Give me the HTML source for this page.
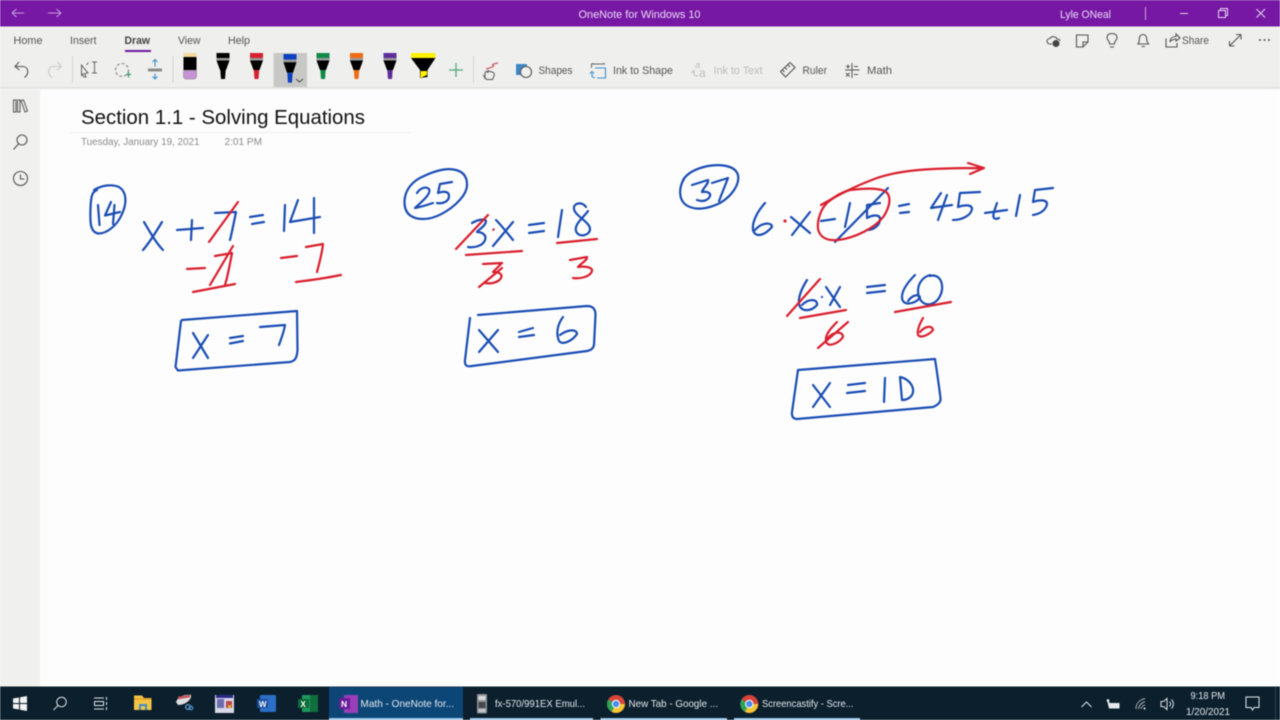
<!DOCTYPE html>
<html><head><meta charset="utf-8"><title>OneNote</title>
<style>
html,body{margin:0;padding:0;width:1280px;height:720px;overflow:hidden;background:#fff}
svg{display:block;filter:blur(.45px)}
text{font-family:"Liberation Sans",sans-serif}
.ink{fill:none;stroke-linecap:round;stroke-linejoin:round;stroke-width:2.2}
.b{stroke:#1a4db4}.r{stroke:#da1f2e}
.ic{fill:none;stroke:#555;stroke-width:1.1}
</style></head><body>
<svg width="1280" height="720" viewBox="0 0 1280 720" xmlns="http://www.w3.org/2000/svg">
<defs>
<linearGradient id="sh" x1="0" x2="0" y1="0" y2="1"><stop offset="0" stop-color="#d8d8d6"/><stop offset="1" stop-color="#fdfdfd"/></linearGradient>
<g id="pen"><rect x="-6.5" y="0" width="13" height="5" fill="var(--c)"/><rect x="-6.5" y="5" width="13" height="2.5" fill="#999"/><path d="M-6.5 7.500H6.500L3 17H-3Z" fill="#000"/><path d="M-2.700 17H2.700L2 26H-2Z" fill="var(--c)"/></g>
</defs>
<rect width="1280" height="720" fill="#fdfdfd"/>
<!-- sidebar -->
<rect x="0" y="87" width="40" height="600" fill="#f0f0ee"/>
<!-- ribbon -->
<rect x="0" y="26" width="1280" height="61" fill="#efefed"/>
<rect x="0" y="87" width="1280" height="3" fill="url(#sh)"/>
<!-- title bar -->
<rect width="1280" height="26.500" fill="#7618a4"/>
<path d="M12 13H24M12 13L16.500 9M12 13L16.500 17M48 13H61M61 13L56.500 9M61 13L56.500 17" fill="none" stroke="#c99be0" stroke-width="1.100"/>
<text x="578.500" y="18" font-size="11" fill="#ecdcf4" textLength="122" lengthAdjust="spacingAndGlyphs">OneNote for Windows 10</text>
<text x="1060" y="18" font-size="11" fill="#ecdcf4" textLength="51" lengthAdjust="spacingAndGlyphs">Lyle ONeal</text>
<path d="M1145.500 7V20" stroke="#c9a3dd" stroke-width="1"/>
<path d="M1180 13.500H1188" stroke="#e6d4ef" stroke-width="1"/>
<path d="M1218.500 10.500H1225.500V17.500H1218.500ZM1220.500 10.500V8.500H1227.500V15.500H1225.500" fill="none" stroke="#e6d4ef" stroke-width="1"/>
<path d="M1256.500 9L1265 17.500M1265 9L1256.500 17.500" stroke="#e6d4ef" stroke-width="1"/>
<!-- tabs -->
<g font-size="11" fill="#555">
<text x="13.500" y="44" textLength="29" lengthAdjust="spacingAndGlyphs">Home</text>
<text x="70" y="44" textLength="26.500" lengthAdjust="spacingAndGlyphs">Insert</text>
<text x="124.500" y="44" font-weight="bold" fill="#444" textLength="25.500" lengthAdjust="spacingAndGlyphs">Draw</text>
<text x="178" y="44" textLength="22.500" lengthAdjust="spacingAndGlyphs">View</text>
<text x="228" y="44" textLength="22" lengthAdjust="spacingAndGlyphs">Help</text>
</g>
<rect x="125" y="50" width="26" height="2" fill="#6a179c"/>
<!-- top-right icons -->
<g class="ic">
<path d="M1049 44H1052M1050 44C1046 44 1046 38.500 1050 38.500C1051 36 1056 36 1057 39C1059 39 1060 40 1060 41"/>
<circle cx="1056" cy="43.500" r="3.500" fill="#444" stroke="none"/>
<path d="M1076.500 35H1088V42L1083 47H1076.500ZM1083 47V42H1088"/>
<path d="M1109.500 44H1114.500V43C1114.500 41.500 1117 40 1117 37.500C1117 34.500 1114.500 33.500 1112 33.500C1109.500 33.500 1107 34.500 1107 37.500C1107 40 1109.500 41.500 1109.500 43ZM1110 47H1114"/>
<path d="M1138 44H1148.500C1146.500 42 1147 40 1146.500 37.500C1146 35.500 1145 34.500 1143 34.500C1141 34.500 1140 35.500 1139.500 37.500C1139 40 1139.500 42 1138 44ZM1141.500 46.500H1145"/>
<path d="M1166 38.500V47H1177V43M1170 42C1170 38 1173 36.500 1176 36.500V34L1180 38L1176 41V39C1174 39 1171 40 1170 42Z"/>
<path d="M1229.500 46L1241 34.500M1229.500 46V41M1229.500 46H1234.500M1241 34.500V39.500M1241 34.500H1236"/>
</g>
<text x="1182" y="44" font-size="11" fill="#555" textLength="27" lengthAdjust="spacingAndGlyphs">Share</text>
<g fill="#555"><circle cx="1260" cy="40" r="1"/><circle cx="1264.500" cy="40" r="1"/><circle cx="1269" cy="40" r="1"/></g>
<!-- toolbar left -->
<path d="M72.500 56V83M173 56V83M473.500 56V83" stroke="#d4d4d2" stroke-width="1"/>
<path d="M19 62L15 66.500L19.500 70M15 66.500H23C28.500 66.500 29.500 74 24.500 77.500" fill="none" stroke="#555" stroke-width="1.100"/>
<path d="M57.500 62L61.500 66.500L57 70M61.500 66.500H53C48 66.500 47 74 52 77.500" fill="none" stroke="#c9c9c7" stroke-width="1.100"/>
<path d="M81.500 65L88 73L84.500 73.500L86 77H84L82.500 74L81.500 76ZM92 62H97M92 73H97M94.500 62V73M86.500 65L88.500 62.500" fill="none" stroke="#666" stroke-width="1"/>
<circle cx="122" cy="70" r="6.500" fill="none" stroke="#888" stroke-width="1.100" stroke-dasharray="3 2"/>
<path d="M126 74.500H131M128.500 72V77.500" stroke="#3f9a6c" stroke-width="1.200"/>
<rect x="148" y="68.500" width="14" height="3" fill="#8c8c8c"/>
<path d="M155 59.500V66.500M152.500 62L155 59.500L157.500 62M155 73.500V79M152.500 76.500L155 79L157.500 76.500" fill="none" stroke="#3d92cf" stroke-width="1.100"/>
<!-- pens -->
<rect x="273.500" y="53" width="33.500" height="34" fill="#c8c8c6"/>
<rect x="183.500" y="53" width="13" height="5" fill="#f4d89c"/>
<rect x="183.500" y="57" width="13" height="13" fill="#000"/>
<path d="M183.500 70.500H196.500V77L195 79H185L183.500 77Z" fill="#c792d6" stroke="#777" stroke-width=".5"/>
<use href="#pen" x="223" y="53" style="--c:#000"/>
<use href="#pen" x="256.500" y="53" style="--c:#d5202e"/>
<g transform="translate(290,54) scale(1,1.100)"><use href="#pen" style="--c:#0b40c0"/></g>
<path d="M296 79L299.500 82L303 79" fill="none" stroke="#444" stroke-width="1"/>
<use href="#pen" x="323" y="53" style="--c:#0e8a48"/>
<use href="#pen" x="356.500" y="53" style="--c:#ee6c14"/>
<use href="#pen" x="390" y="53" style="--c:#5d2d9a"/>
<path d="M411 53H435.500V58L427.500 70V77L420 78V70L411 58Z" fill="#000"/>
<path d="M411 53H435.500V58H411Z" fill="#fff200"/><path d="M420.500 71H427V75L420.500 78Z" fill="#fff200"/>
<path d="M449 70H463M456 63V77" stroke="#4fa578" stroke-width="1.200"/>
<!-- toolbar right -->
<path d="M485 79V73C485 71 488 71 488 73V70M488 71L492 72C494 72.500 495 74 494 76L492.500 79.500H486.500L483 75" fill="none" stroke="#555" stroke-width="1"/>
<path d="M486 69C490 68 496 66 493 65C491 65 495 63 498 63" fill="none" stroke="#c8404a" stroke-width="1"/>
<path d="M516 64H527V69.500C522 70 521 72 520.500 75H516Z" fill="#3d86c6"/>
<circle cx="526" cy="72" r="5.500" fill="#efefed" stroke="#555" stroke-width="1.100"/>
<text x="538.500" y="74" font-size="11" fill="#555" textLength="34" lengthAdjust="spacingAndGlyphs">Shapes</text>
<path d="M591.500 68V64H605M593 64V63M604 64V63" fill="none" stroke="#666" stroke-width="1"/>
<path d="M595 68H605.500V78H597M592 73V76C592 77 593 77.500 595 77.500M590 73.500L592 71.500L594 73.500" fill="none" stroke="#3d8fcf" stroke-width="1.100"/>
<text x="613" y="74" font-size="11" fill="#555" textLength="60" lengthAdjust="spacingAndGlyphs">Ink to Shape</text>
<text x="695" y="68" font-size="9" fill="#bdbdbb" font-style="italic">a</text>
<text x="699" y="77" font-size="12" fill="#bdbdbb">a</text>
<path d="M694 70V74C694 75.500 695 76 698 76M691.500 73L694 70" fill="none" stroke="#bdbdbb" stroke-width="1"/>
<text x="713.500" y="74" font-size="11" fill="#bbbbb9" textLength="49" lengthAdjust="spacingAndGlyphs">Ink to Text</text>
<path d="M780.500 71.500L790 62.500L795 67.500L785.500 77ZM785 67.500L787 69.500M788 65L790 67M782.500 70L784.500 72" fill="none" stroke="#555" stroke-width="1.100"/>
<text x="802.500" y="74" font-size="11" fill="#555" textLength="24.500" lengthAdjust="spacingAndGlyphs">Ruler</text>
<path d="M845 70H859.500M852 63V78M846 66.500H850M848 64.500V68.500M854 66.500H858M846 73L849.500 76.500M849.500 73L846 76.500M854 74.500H858" fill="none" stroke="#555" stroke-width="1"/>
<text x="867" y="74" font-size="11" fill="#555" textLength="25" lengthAdjust="spacingAndGlyphs">Math</text>
<!-- sidebar icons -->
<path d="M13.500 100V112H16V100ZM17.500 100V112H20V100ZM21 100.500L25 112L27.500 111L23.500 100Z" fill="none" stroke="#555" stroke-width="1"/>
<circle cx="22" cy="140" r="5" class="ic"/><path d="M18.500 144L13.500 149.500" stroke="#555" stroke-width="1.100"/>
<circle cx="20.500" cy="178.500" r="7" class="ic"/><path d="M20.500 174.500V179H24.500" class="ic"/>
<!-- page title -->
<text x="81" y="124" font-size="20" fill="#111" textLength="284" lengthAdjust="spacingAndGlyphs">Section 1.1 - Solving Equations</text>
<rect x="70" y="132" width="341" height="1" fill="#efefef"/>
<text x="81" y="145" font-size="10.500" fill="#8b8b8b" textLength="118.500" lengthAdjust="spacingAndGlyphs">Tuesday, January 19, 2021</text>
<text x="224.500" y="145" font-size="10.500" fill="#8b8b8b" textLength="37.500" lengthAdjust="spacingAndGlyphs">2:01 PM</text>

<!-- INK 14 -->
<g class="ink b">
<path d="M97 190C92 192 91 196 90.500 208C90 222 90 232 98 233.500C106 234 117 226 122 214C127 203 127 192 119 187C112 184 102 185 94 190"/>
<path d="M98 205L99.500 225M111 202L105 215.500L120 212M114.500 205L113 224"/>
<path d="M144 222C150 232 156 243 163 250M162 222C156 232 150 242 143 250"/>
<path d="M177 230L203 228M192 220L191 240"/>
<path d="M215 213L236 212C234 222 232 232 230 240"/>
<path d="M250 217L263 215M252 224L264 222"/>
<path d="M285 205L284 231M298 200L290 222L320 217M314 198L314 233"/>
<path d="M182 320L297 311L297.500 350C297 358 295 361 290 362L178 370.500L175.500 367L181 321"/>
<path d="M193 333L208 358M208 335L193 358"/>
<path d="M230 338L243 336M230 343.500L243 341"/>
<path d="M260 327L285 325C284 332 281 339 279 345"/>
</g>
<g class="ink r">
<path d="M209 242L238 202"/>
<path d="M187 269L205 268M215 256L232 253C230 264 228 275 225 285M210 285L233 246M193 292L235 284"/>
<path d="M281 258L297 256M306 247L323 244C322 254 319 264 317 272M296 282C312 280 326 278 341 275"/>
</g>
<!-- INK 25 -->
<g class="ink b">
<path d="M424 176C412 181 405 190 404.500 201C404 214 412 219 423 219C438 219 455 207 463 196C470 186 468 173 456 170C445 167 432 172 422 177"/>
<path d="M417 193C420 188 426 186 429 189C432 194 420 203 415 208C421 207 427 205 433 203"/>
<path d="M452 182L440 184L438 193C443 191 449 191 449 196C449 202 442 204 437 203"/>
<path d="M472 223C477 220 485 218 486 221C486 226 478 230 477 232C482 232 487 235 485 240C483 246 474 248 468 247"/>
<path d="M496 220C502 226 508 234 513 240M513 222L493 246"/>
<path d="M529 225L544 223M529 233L544 231"/>
<path d="M562 210L558 237"/>
<path d="M586 207C582 201 573 203 574 209C575 216 590 222 590 229C590 236 578 238 576 231C574 224 584 217 588 211"/>
<path d="M478 315L587 306C593 306 595.500 309 595.500 315L594 345C593 349 591 350 587 351L472 366C467 367 464.500 366 465 360L470 318"/>
<path d="M479 330L498 352M498 330L479 352"/>
<path d="M519 332L533 328M519 337L534 335"/>
<path d="M563 317C557 325 556 334 559 341C563 346 573 340 577 334C577 329 568 329 560 335"/>
</g>
<g class="ink r">
<path d="M456 249L488 215"/>
<path d="M466 255L522 251"/>
<path d="M483 264L502 263L493 272C499 272 503 274 501 278C498 283 490 284 485 283M479 287L502 268"/>
<path d="M557 243L597 239"/>
<path d="M570 260L587 257C588 260 580 264 578 267C584 266 593 267 592 271C590 277 580 279 573 278"/>
</g>
<circle cx="493.500" cy="229.500" r="1.300" fill="#c03050"/>
<!-- INK 37 -->
<g class="ink b">
<path d="M684 179C679 187 678 199 686 205C695 211 708 209 720 203C732 196 740 184 738 175C735 165 720 164 708 166C698 168 688 172 683 180"/>
<path d="M692 185L708 180C709 184 702 189 702 192C707 191 711 193 710 196C708 201 702 202 697 200"/>
<path d="M712 183L728 178L719 201"/>
<path d="M765 203C757 212 752 222 753 230C755 238 764 236 772 227C772 222 762 222 755 230"/>
<path d="M791 217C797 222 804 228 810 233M810 212L792 235"/>
<path d="M821 221L835 219M850 203L845 227"/>
<path d="M880 203L867 205L867 218C872 215 880 214 880 219C880 226 873 230 867 230"/>
<path d="M888 188L835 242"/>
<path d="M899 206L909 204M900 213L909 212"/>
<path d="M941 193L931 208L952 205M947 195L938 220"/>
<path d="M980 192L960 193L958 207C963 205 972 204 972 209C971 216 961 220 953 220"/>
<path d="M985 213L1007 210M997 203C995 209 992 216 994 218C995 219 997 219 999 218"/>
<path d="M1020 195L1016 216"/>
<path d="M1053 188L1035 190L1033 202C1038 200 1047 199 1047 204C1046 210 1040 214 1033 215"/>
<path d="M807 280C802 288 798 297 799 304C801 313 812 311 817 305C818 299 809 298 802 305"/>
<path d="M826 287C830 293 835 300 840 307M840 287L830 305"/>
<path d="M867 287L885 285M867 293L885 291"/>
<path d="M915 275C908 282 902 290 902 297C902 306 913 305 920 298C920 294 913 294 908 301"/>
<path d="M930 275C923 277 918 283 918 291C918 300 924 306 931 304C939 302 943 292 942 285C941 278 936 274 930 276"/>
<path d="M798 370L935 359C937 372 939 386 940.500 398C941 402 938 405 933 407L797 419C793 419 791.500 416 792 412L798 370"/>
<path d="M813 385L830 407M830 383L813 407"/>
<path d="M848 385L865 383M847 393L865 391"/>
<path d="M885 378L884 402"/>
<path d="M900 377L902 400C908 400 914 396 913 389C912 383 906 378 900 377"/>
</g>
<g class="ink r">
<path d="M828 202C821 208 817 220 818 229C820 238 828 241 838 240C855 238 875 228 884 216C890 206 892 196 885 191C875 187 860 189 850 190C842 192 834 197 828 202"/>
<path d="M821 205C835 197 850 188 877 178C900 170 930 168 983 168M968 163L984 168L970 174"/>
<path d="M787 316L820 279M800 318L846 310"/>
<path d="M837 322C830 329 825 335 826 341C827 348 838 344 843 337C843 331 834 331 828 338M818 348L848 322"/>
<path d="M895 312L951 302"/>
<path d="M923 318C919 325 917 331 918 335C921 339 930 334 933 330C932 325 925 326 920 332"/>
</g>
<circle cx="785" cy="221" r="1.600" fill="#da1f2e"/>
<circle cx="822" cy="297" r="1.100" fill="#1a4db4"/>

<!-- taskbar -->
<rect x="0" y="686.500" width="1280" height="33.500" fill="#0b1f2d"/>
<rect x="329" y="687" width="134" height="33" fill="#0c4677"/>
<rect x="329" y="718" width="134" height="2" fill="#9cc9ea"/>
<rect x="470" y="718" width="123" height="2" fill="#9cc9ea"/>
<rect x="600.500" y="718" width="126.500" height="2" fill="#9cc9ea"/>
<rect x="734" y="718" width="126" height="2" fill="#9cc9ea"/>
<path d="M13 698.500L19 697.500V703H13ZM20 697.300L27 696V703H20ZM13 704H19V709.500L13 708.500ZM20 704H27V711L20 709.700Z" fill="#f2f2f2"/>
<circle cx="61.500" cy="702" r="4.800" fill="none" stroke="#dfe3e6" stroke-width="1"/><path d="M58 705.500L53.500 710" stroke="#dfe3e6" stroke-width="1"/>
<path d="M94 698H104M94 709H104M94.500 701.500H103.500V705.500H94.500ZM106.500 697V700M106.500 702V705M106.500 707V710" fill="none" stroke="#dfe3e6" stroke-width="1"/>
<path d="M134 695.500H142L144 698H151.500V710H134Z" fill="#f4c542"/><rect x="134" y="698" width="17.500" height="2" fill="#e6a92e"/><path d="M140 710V705H146V710" fill="none" stroke="#3d8ccb" stroke-width="2"/>
<path d="M176 702C178 696 186 694 191 695C192 699 186 705 178 705Z" fill="#ddd"/><path d="M178 698L190 696" stroke="#c6525a" stroke-width="2.500"/>
<circle cx="188" cy="707" r="2.300" fill="none" stroke="#5b9bd5" stroke-width="1.300"/><circle cx="191" cy="708" r="1.800" fill="none" stroke="#5b9bd5" stroke-width="1.100"/>
<rect x="215" y="695" width="19" height="18" fill="#d7d7e8"/><rect x="216" y="695" width="17" height="3" fill="#2a2a88"/>
<rect x="217" y="699" width="7" height="9" fill="#6c6cae"/><rect x="226" y="701" width="6" height="7" fill="#c04545"/><rect x="228" y="705" width="3" height="3" fill="#d8b232"/>
<rect x="260" y="695" width="16" height="17" rx="1" fill="#2b6fc6"/><rect x="257" y="699" width="11" height="9" fill="#1a4f9e"/>
<text x="259" y="707" font-size="8" font-weight="bold" fill="#fff">W</text>
<rect x="302" y="695" width="16" height="17" rx="1" fill="#1d9a5a"/><rect x="310" y="695" width="8" height="17" fill="#116f3f"/><rect x="298" y="699" width="11" height="9" fill="#0e6a38"/>
<text x="300.500" y="707" font-size="8" font-weight="bold" fill="#fff">X</text>
<rect x="344" y="695" width="14" height="18" fill="#9a3fb8"/><rect x="339" y="698" width="11" height="11" fill="#6a1c9a"/>
<text x="341" y="707" font-size="8.500" font-weight="bold" fill="#fff">N</text>
<g font-size="10.500" fill="#e4eaee">
<text x="360.500" y="707" textLength="93.500" lengthAdjust="spacingAndGlyphs">Math - OneNote for...</text>
<text x="495" y="707" textLength="90" lengthAdjust="spacingAndGlyphs">fx-570/991EX Emul...</text>
<text x="628.500" y="707" textLength="89.500" lengthAdjust="spacingAndGlyphs">New Tab - Google ...</text>
<text x="762" y="707" textLength="91.500" lengthAdjust="spacingAndGlyphs">Screencastify - Scre...</text>
</g>
<rect x="477" y="694" width="10" height="19.500" rx="1" fill="#8f9396"/><rect x="478.500" y="696" width="7" height="4" fill="#d6d8d8"/><rect x="478.500" y="702" width="7" height="6" fill="#44484c"/><rect x="478.500" y="709" width="7" height="3" fill="#c6c8c8"/>
<g id="chrome1">
<circle cx="616" cy="704" r="9" fill="#d8433a"/>
<path d="M616 704L611.500 711.800A9 9 0 0 0 624.800 702.400L625 704Z" fill="#f4c534"/>
<path d="M616 704L611.500 711.800A9 9 0 0 1 607 704A9 9 0 0 1 608.200 699.500Z" fill="#2ea356"/>
<circle cx="616" cy="704" r="4.200" fill="#fff"/><circle cx="616" cy="704" r="3.200" fill="#4a8df0"/>
</g>
<use href="#chrome1" x="133.300"/>
<!-- tray -->
<path d="M1081.500 707L1086.500 702L1091.500 707" fill="none" stroke="#dfe3e6" stroke-width="1"/>
<path d="M1107 700L1110 703H1119.500V708.500H1109Z" fill="#e6eaec"/><circle cx="1108" cy="700.500" r="1.300" fill="#fff"/>
<path d="M1136 709C1136 704 1139 700 1145 698.500M1138.500 709C1139 706 1141 703 1145 701.500M1141 709C1141 707 1143 705.500 1145 705" fill="none" stroke="#aab0b4" stroke-width="1"/><circle cx="1144.500" cy="708.500" r="1" fill="#e4eaee"/>
<path d="M1161 701.500H1163.500L1167 698.500V709.500L1163.500 706.500H1161ZM1169.500 701.500C1171 703 1171 705 1169.500 706.500M1171.500 699.500C1174 702 1174 706 1171.500 708.500" fill="none" stroke="#dfe3e6" stroke-width="1"/>
<g font-size="10.500" fill="#e4eaee">
<text x="1190.500" y="699" textLength="34.500" lengthAdjust="spacingAndGlyphs">9:18 PM</text>
<text x="1186" y="715" textLength="44" lengthAdjust="spacingAndGlyphs">1/20/2021</text>
</g>
<path d="M1246 697H1259V707.500H1254L1252.500 710L1251 707.500H1246Z" fill="none" stroke="#e4eaee" stroke-width="1"/>
<path d="M1275.500 687V720" stroke="#33444f" stroke-width="1"/>
</svg>
</body></html>
